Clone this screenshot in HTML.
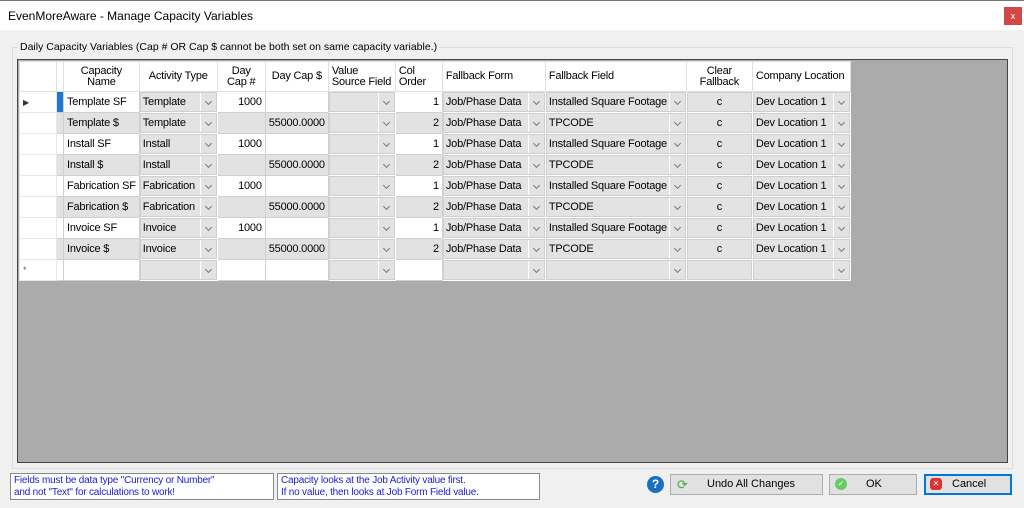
<html><head><style>
body{margin:0;width:1024px;height:508px;background:#f0f0f0;font-family:"Liberation Sans",sans-serif;font-size:11px;position:relative;overflow:hidden;color:#000}
.a{position:absolute}
table{border-collapse:collapse;table-layout:fixed;position:absolute;left:19px;top:61px}
td{height:20px;border:1px solid #d0d0d0;padding:0 3px;white-space:nowrap;overflow:hidden;background:#fff;font-size:11px;letter-spacing:-0.2px}
tr td{height:21px}
tr.h td{height:30px;line-height:11px;background:#fff;border-color:#e0e0e0;vertical-align:middle}
tr.g td{background:#e2e2e2}
td.rh{background:#fff!important;border-color:#e8e8e8}
td.c{background:#e3e3e3!important;position:relative;border:1px solid #fff;box-shadow:inset 0 0 0 1px #cfcfcf}
td.c:after{content:"";position:absolute;right:6px;top:7px;width:4px;height:4px;border-right:1px solid #777;border-bottom:1px solid #777;transform:rotate(45deg)}
td.c:before{content:"";position:absolute;right:16px;top:1px;bottom:1px;border-left:1px solid #fff}
td.r{text-align:right}
td.b{background:#e3e3e3!important;text-align:center;border:1px solid #fff;box-shadow:inset 0 0 0 1px #cfcfcf}
.btn{position:absolute;top:474px;height:19px;border:1px solid #adadad;background:#e1e1e1;font-size:11px;line-height:19px}
</style></head><body>
<div class="a" style="left:0;top:0;width:1024px;height:30px;background:#fff"></div>
<div class="a" style="left:0;top:0;width:1024px;height:1px;background:#777"></div>
<div class="a" style="left:8px;top:9px;font-size:12px">EvenMoreAware - Manage Capacity Variables</div>
<div class="a" style="left:1004px;top:7px;width:18px;height:18px;background:#d04848;color:#fff;font-size:9px;text-align:center;line-height:18px">x</div>
<div class="a" style="left:12px;top:47px;width:999px;height:420px;border:1px solid #dcdcdc"></div>
<div class="a" style="left:18px;top:41px;padding:0 2px;background:#f0f0f0;font-size:10.5px">Daily Capacity Variables (Cap # OR Cap $ cannot be both set on same capacity variable.)</div>
<div class="a" style="left:17px;top:59px;width:989px;height:402px;background:#ababab;border:1px solid #444"></div>
<table>
<colgroup><col style="width:37px"><col style="width:3px"><col style="width:72px"><col style="width:78px"><col style="width:48px"><col style="width:60px"><col style="width:67px"><col style="width:47px"><col style="width:103px"><col style="width:141px"><col style="width:66px"><col style="width:98px"></colgroup>
<tr class="h"><td class="rh"></td><td></td><td style="text-align:center">Capacity<br>Name</td><td style="text-align:center">Activity Type</td><td style="text-align:center">Day<br>Cap #</td><td style="text-align:center">Day Cap $</td><td>Value<br>Source Field</td><td>Col<br>Order</td><td>Fallback Form</td><td>Fallback Field</td><td style="text-align:center">Clear<br>Fallback</td><td>Company Location</td></tr>
<tr><td class="rh" style="font-size:8px;color:#333">&#9654;</td><td style="background:#1e78d0"></td><td>Template SF</td><td class="c">Template</td><td class="r">1000</td><td></td><td class="c"></td><td class="r">1</td><td class="c">Job/Phase Data</td><td class="c">Installed Square Footage</td><td class="b">c</td><td class="c">Dev Location 1</td></tr>
<tr class="g"><td class="rh"></td><td></td><td>Template $</td><td class="c">Template</td><td></td><td>55000.0000</td><td class="c"></td><td class="r">2</td><td class="c">Job/Phase Data</td><td class="c">TPCODE</td><td class="b">c</td><td class="c">Dev Location 1</td></tr>
<tr><td class="rh"></td><td></td><td>Install SF</td><td class="c">Install</td><td class="r">1000</td><td></td><td class="c"></td><td class="r">1</td><td class="c">Job/Phase Data</td><td class="c">Installed Square Footage</td><td class="b">c</td><td class="c">Dev Location 1</td></tr>
<tr class="g"><td class="rh"></td><td></td><td>Install $</td><td class="c">Install</td><td></td><td>55000.0000</td><td class="c"></td><td class="r">2</td><td class="c">Job/Phase Data</td><td class="c">TPCODE</td><td class="b">c</td><td class="c">Dev Location 1</td></tr>
<tr><td class="rh"></td><td></td><td>Fabrication SF</td><td class="c">Fabrication</td><td class="r">1000</td><td></td><td class="c"></td><td class="r">1</td><td class="c">Job/Phase Data</td><td class="c">Installed Square Footage</td><td class="b">c</td><td class="c">Dev Location 1</td></tr>
<tr class="g"><td class="rh"></td><td></td><td>Fabrication $</td><td class="c">Fabrication</td><td></td><td>55000.0000</td><td class="c"></td><td class="r">2</td><td class="c">Job/Phase Data</td><td class="c">TPCODE</td><td class="b">c</td><td class="c">Dev Location 1</td></tr>
<tr><td class="rh"></td><td></td><td>Invoice SF</td><td class="c">Invoice</td><td class="r">1000</td><td></td><td class="c"></td><td class="r">1</td><td class="c">Job/Phase Data</td><td class="c">Installed Square Footage</td><td class="b">c</td><td class="c">Dev Location 1</td></tr>
<tr class="g"><td class="rh"></td><td></td><td>Invoice $</td><td class="c">Invoice</td><td></td><td>55000.0000</td><td class="c"></td><td class="r">2</td><td class="c">Job/Phase Data</td><td class="c">TPCODE</td><td class="b">c</td><td class="c">Dev Location 1</td></tr>
<tr><td class="rh" style="font-size:9px;color:#555">*</td><td></td><td></td><td class="c"></td><td></td><td></td><td class="c"></td><td></td><td class="c"></td><td class="c"></td><td class="b"></td><td class="c"></td></tr>
</table>
<div class="a" style="left:10px;top:473px;width:259px;height:24px;border:1px solid #8a8a8a;background:#fff;color:#2020d0;font-size:10px;line-height:11.5px;padding:1px 0 0 3px;letter-spacing:-0.2px">Fields must be data type "Currency or Number"<br>and not "Text" for calculations to work!</div>
<div class="a" style="left:277px;top:473px;width:258px;height:24px;border:1px solid #8a8a8a;background:#fff;color:#2020d0;font-size:10px;line-height:11.5px;padding:1px 0 0 3px;letter-spacing:-0.2px">Capacity looks at the Job Activity value first.<br>If no value, then looks at Job Form Field value.</div>
<div class="a" style="left:647px;top:476px;width:17px;height:17px;border-radius:50%;background:#1a6fc0;color:#fff;font-weight:bold;font-size:12px;text-align:center;line-height:17px">?</div>
<div class="btn" style="left:670px;width:151px"><span style="position:absolute;left:6px;color:#4a4;font-size:13px">&#10227;</span><span style="position:absolute;left:36px">Undo All Changes</span></div>
<div class="btn" style="left:829px;width:86px"><span style="position:absolute;left:5px;top:3px;width:12px;height:12px;border-radius:50%;background:#6c6;color:#fff;font-size:8px;line-height:12px;text-align:center">&#10003;</span><span style="position:absolute;left:36px">OK</span></div>
<div class="btn" style="left:924px;width:86px;border:1px solid #0078d7;box-shadow:inset 0 0 0 1px #0078d7"><span style="position:absolute;left:5px;top:3px;width:12px;height:12px;border-radius:3px;background:#d33;color:#fff;font-size:8px;line-height:12px;text-align:center">&#10005;</span><span style="position:absolute;left:27px">Cancel</span></div>
</body></html>
